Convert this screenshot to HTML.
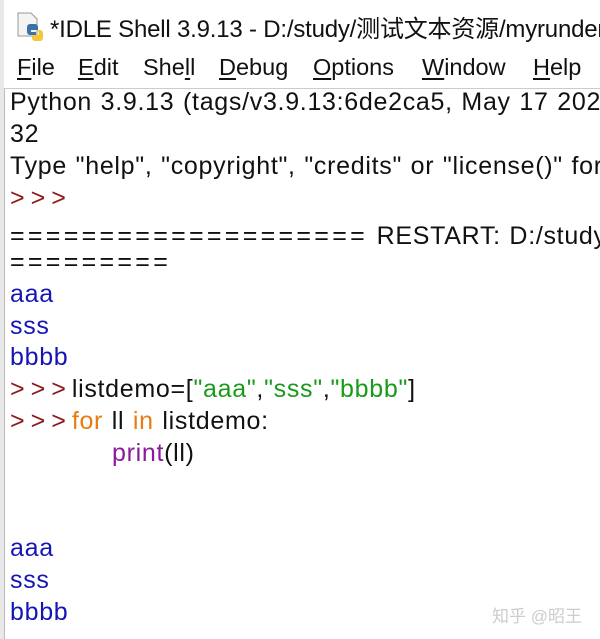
<!DOCTYPE html>
<html><head><meta charset="utf-8"><style>
html,body{margin:0;width:600px;height:639px;overflow:hidden}
body{background:#fff;font-family:"Liberation Sans","Noto Sans CJK SC",sans-serif;position:relative}
#wrap{position:absolute;left:0;top:0;width:600px;height:639px;overflow:hidden}
.t{position:absolute;white-space:nowrap}
#title{left:50px;top:9px;font-size:24px;color:#111;letter-spacing:-0.2px}
.m{position:absolute;top:54px;font-size:23.5px;color:#111}
.m u{text-decoration:underline;text-underline-offset:3px}
#area{position:absolute;left:4px;top:88px;right:0;bottom:0;border-left:1px solid #bbb;border-top:1px solid #ccc}
.l{position:absolute;left:10px;font-size:25px;white-space:nowrap;letter-spacing:0.7px;word-spacing:1px;color:#111}
.p{color:#8b1a1a;letter-spacing:6px}.o{color:#1515b5}.k{color:#e87c10}.s{color:#1a9a1a}.b{color:#8a1a9a}
.eq{letter-spacing:3.3px}
</style></head><body><div id="wrap">
<div style="position:absolute;left:0;top:0;width:4px;height:639px;background:#e8e8e8"></div>
<svg style="position:absolute;left:16px;top:12px" width="28" height="30" viewBox="0 0 28 30">
<path d="M2 1h13l6 6v17H2z" fill="#f4f4f4" stroke="#999"/>
<path d="M14 12h5a3 3 0 0 1 3 3v3h-7v2h5v3h-6a3 3 0 0 1-3-3v-5a3 3 0 0 1 3-3z" fill="#3a73a8"/>
<path d="M22 18h2a3 3 0 0 1 3 3v5a3 3 0 0 1-3 3h-5a3 3 0 0 1-3-3v-3h7z" fill="#f5c83a"/>
</svg>
<div class="t" id="title">*IDLE Shell 3.9.13 - D:/study/测试文本资源/myrundemo</div>
<span class="m" style="left:17px"><u>F</u>ile</span>
<span class="m" style="left:78px"><u>E</u>dit</span>
<span class="m" style="left:143px">She<u>l</u>l</span>
<span class="m" style="left:219px"><u>D</u>ebug</span>
<span class="m" style="left:313px"><u>O</u>ptions</span>
<span class="m" style="left:422px"><u>W</u>indow</span>
<span class="m" style="left:533px"><u>H</u>elp</span>
<div id="area"></div>
<div class="l" style="top:88px">Python 3.9.13 (tags/v3.9.13:6de2ca5, May 17 2022, 16:36:42)</div>
<div class="l" style="top:120px">32</div>
<div class="l" style="top:152px">Type "help", "copyright", "credits" or "license()" for more</div>
<div class="l p" style="top:184px">&gt;&gt;&gt;</div>
<div class="l" style="top:216px"><span class="eq">====================</span> RESTART: D:/study/测试</div>
<div class="l eq" style="top:248px">=========</div>
<div class="l o" style="top:280px">aaa</div>
<div class="l o" style="top:312px">sss</div>
<div class="l o" style="top:343px">bbbb</div>
<div class="l" style="top:375px"><span class="p">&gt;&gt;&gt;</span>listdemo=[<span class="s">"aaa"</span>,<span class="s">"sss"</span>,<span class="s">"bbbb"</span>]</div>
<div class="l" style="top:407px"><span class="p">&gt;&gt;&gt;</span><span class="k">for</span> ll <span class="k">in</span> listdemo:</div>
<div class="l" style="top:439px;left:112px"><span class="b">print</span>(ll)</div>
<div class="l o" style="top:534px">aaa</div>
<div class="l o" style="top:566px">sss</div>
<div class="l o" style="top:598px">bbbb</div>
<div class="t" style="left:492px;top:602px;font-size:17px;color:#ccc">知乎 @昭王</div>
</div></body></html>
